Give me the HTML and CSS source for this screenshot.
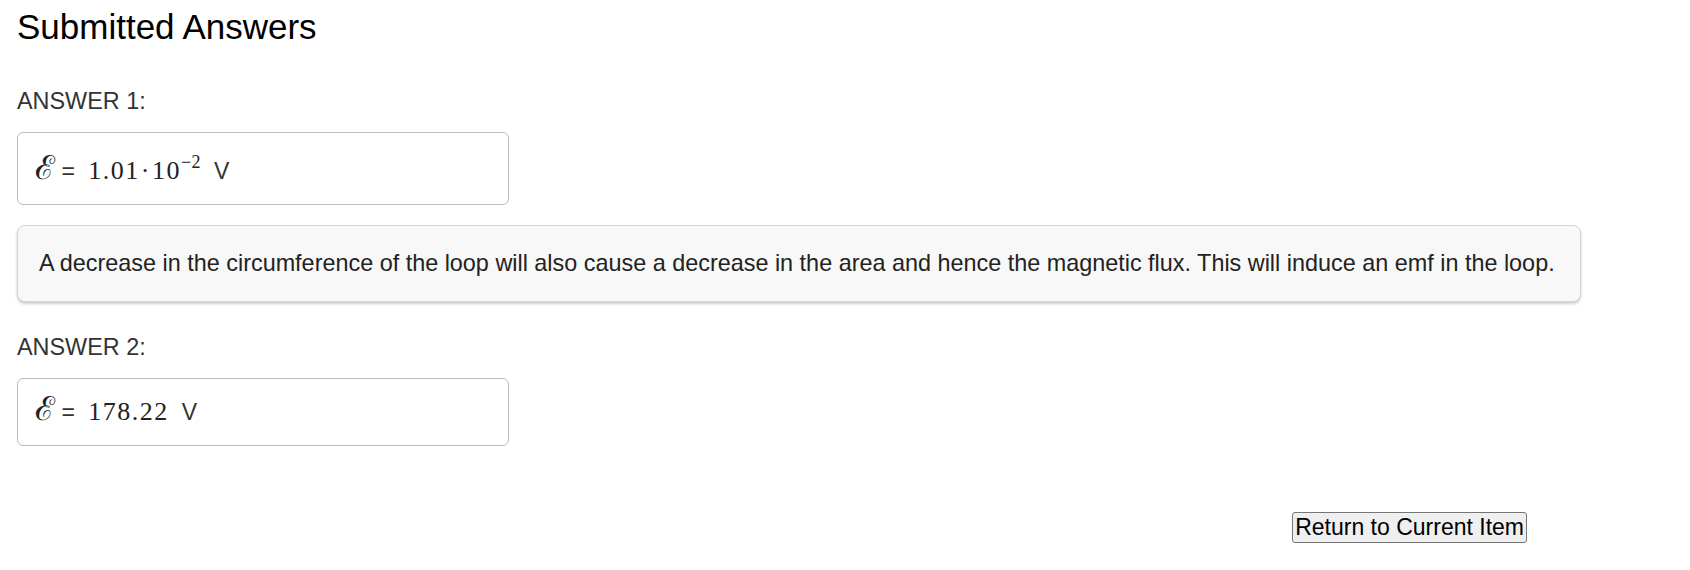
FILE: index.html
```html
<!DOCTYPE html>
<html lang="en">
<head>
    <meta charset="UTF-8">
    <title>Submitted Answers</title>
    <link rel="stylesheet" href="styles.css">
</head>
<body>
    <div class="page">
        <h1 class="page-title">Submitted Answers</h1>

        <div class="answer-label">ANSWER 1:</div>
        <div class="answer-box">
            <span class="var">ℰ</span> = <span class="math">1.01<span class="cdot">·</span>10<sup class="sup">−2</sup></span><span class="unit">V</span>
        </div>

        <div class="explanation">A decrease in the circumference of the loop will also cause a decrease in the area and hence the magnetic flux. This will induce an emf in the loop.</div>

        <div class="answer-label second">ANSWER 2:</div>
        <div class="answer-box">
            <span class="var">ℰ</span> = <span class="math">178.22</span><span class="unit">V</span>
        </div>

        <div class="footer">
            <button class="btn-return">Return to Current Item</button>
        </div>
    </div>
</body>
</html>
```

FILE: styles.css
```css
* {
    box-sizing: border-box;
}

body {
    margin: 0;
    background-color: #fff;
    font-family: 'Liberation Sans', Arial, sans-serif;
}

.page {
    padding: 7px 109px 0 17px;
}

.page-title {
    margin: 0;
    font-size: 35px;
    font-weight: normal;
    line-height: 40px;
    color: #000;
}

.answer-label {
    margin-top: 42px;
    font-size: 23.4px;
    line-height: 24px;
    color: #333;
}

.answer-label.second {
    margin-top: 33px;
}

.answer-box {
    width: 492px;
    margin-top: 19px;
    padding: 21px 17px;
    border: 1px solid #bcbcbc;
    border-radius: 6px;
    font-size: 23px;
    line-height: 24px;
    color: #333;
    white-space: nowrap;
}

/* script E for the emf symbol */
.var {
    font-family: 'DejaVu Serif', serif;
    font-size: 33px;
    line-height: 0;
    color: #222;
}

.math {
    margin-left: 7px;
    font-family: 'Liberation Serif', serif;
    font-size: 26px;
    line-height: 20px;
    letter-spacing: 1.5px;
    color: #222;
}

.cdot {
    margin: 0 1px;
}

.sup {
    font-size: 18px;
    line-height: 17px;
    vertical-align: 11px;
    letter-spacing: 0.5px;
}

.unit {
    margin-left: 13px;
}

.explanation {
    margin-top: 20px;
    padding: 26px 21px;
    background-color: #f8f8f8;
    border: 1px solid #d4d4d4;
    border-radius: 8px;
    box-shadow: 0 2px 3px rgba(0, 0, 0, 0.2);
    font-size: 23.4px;
    line-height: 23px;
    color: #222;
}

.footer {
    display: flex;
    justify-content: flex-end;
    margin-top: 66px;
    padding-right: 54px;
}

.btn-return {
    padding: 1px 2px;
    background-color: #efefef;
    border: 1px solid #767676;
    border-radius: 3px;
    font-family: 'Liberation Sans', Arial, sans-serif;
    font-size: 23px;
    line-height: 27px;
    color: #000;
}
```
